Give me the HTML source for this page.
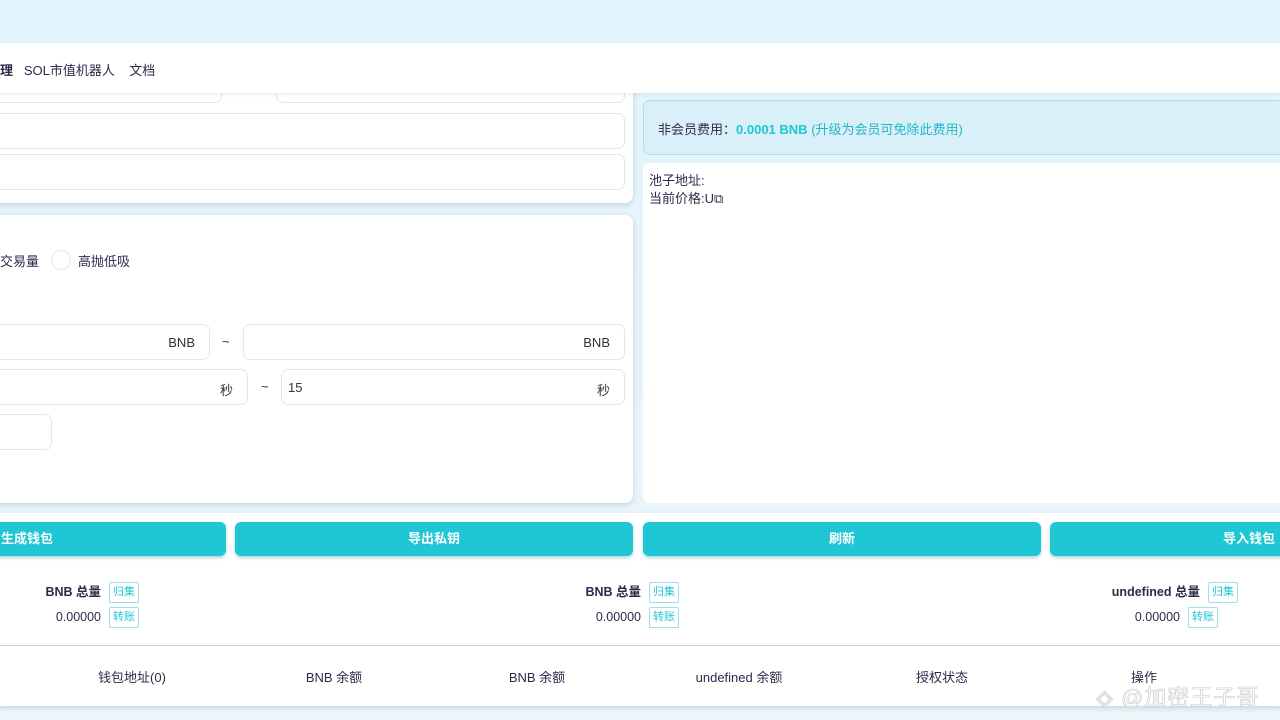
<!DOCTYPE html>
<html><head><meta charset="utf-8"><style>
*{box-sizing:border-box;margin:0;padding:0}
body{width:1280px;height:720px;overflow:hidden;background:linear-gradient(180deg,#e2f4fb,#eef5fb);font-family:"Liberation Sans","Noto Sans CJK SC",sans-serif;color:#2d2a4a;position:relative;font-size:13px}
.a{position:absolute}
.card{background:#fff;border-radius:8px;box-shadow:0 2px 6px rgba(120,150,170,.35)}
.inp{position:absolute;background:#fff;border:1px solid #e3e6ee;border-radius:7px;font-size:13px;color:#333}
.btn{position:absolute;top:522px;height:34px;background:#1fc6d4;border-radius:6px;color:#fff;font-weight:bold;font-size:13px;text-align:center;line-height:34px;box-shadow:0 2px 3px rgba(0,120,140,.3)}
.tag{display:inline-block;border:1px solid #9fe0e8;color:#1fc6d4;font-size:11px;padding:2px 3px;border-radius:2px;margin-left:8px;line-height:15px;vertical-align:middle}
.th{position:absolute;top:667px;font-size:13px;text-align:center;transform:translateX(-50%);white-space:nowrap}
</style></head><body>
<div class="a" style="left:0;top:43px;width:1280px;height:50px;background:#fff;box-shadow:0 2px 4px rgba(0,0,0,.06);z-index:3"></div>
<div class="a" style="left:0;top:60px;z-index:4;font-size:13px;white-space:nowrap"><b>理</b>&nbsp;&nbsp; SOL市值机器人&nbsp;&nbsp;&nbsp; 文档</div>
<div class="card a" style="left:-10px;top:60px;width:643px;height:143px"></div>
<div class="inp" style="left:-10px;top:80px;width:232px;height:23px"></div>
<div class="inp" style="left:276px;top:80px;width:349px;height:23px"></div>
<div class="inp" style="left:-10px;top:113px;width:635px;height:36px"></div>
<div class="inp" style="left:-10px;top:154px;width:635px;height:36px"></div>
<div class="card a" style="left:-10px;top:215px;width:643px;height:288px"></div>
<div class="a" style="left:0;top:251px">交易量</div>
<div class="a" style="left:51px;top:250px;width:20px;height:20px;border:1px solid #e3e6ee;border-radius:50%"></div>
<div class="a" style="left:78px;top:251px">高抛低吸</div>
<div class="inp" style="left:-10px;top:324px;width:220px;height:36px;text-align:right;padding:10px 14px">BNB</div>
<div class="a" style="left:222px;top:334px">~</div>
<div class="inp" style="left:243px;top:324px;width:382px;height:36px;text-align:right;padding:10px 14px">BNB</div>
<div class="inp" style="left:-10px;top:369px;width:258px;height:36px;text-align:right;padding:10px 14px">秒</div>
<div class="a" style="left:261px;top:379px">~</div>
<div class="inp" style="left:281px;top:369px;width:344px;height:36px;padding:10px 6px"><span>15</span><span style="float:right;margin-right:8px">秒</span></div>
<div class="inp" style="left:-10px;top:414px;width:62px;height:36px"></div>
<div class="a" style="left:643px;top:100px;width:650px;height:55px;background:#daf0f9;border:1px solid #a8e2ec;border-radius:7px;padding:18px 14px;font-size:13px">非会员费用：<b style="color:#1fc6d4">0.0001 BNB</b> <span style="color:#1fb8c8">(升级为会员可免除此费用)</span></div>
<div class="a" style="left:643px;top:163px;width:650px;height:340px;background:#fff;border-radius:6px;padding:9px 6px;line-height:18px">池子地址:<br>当前价格:U<span style="font-size:13px">⧉</span></div>
<div class="card a" style="left:-10px;top:513px;width:1300px;height:193px"></div>
<div class="btn" style="left:-10px;width:236px;text-align:left;padding-left:11px">生成钱包</div>
<div class="btn" style="left:235px;width:398px">导出私钥</div>
<div class="btn" style="left:643px;width:398px">刷新</div>
<div class="btn" style="left:1050px;width:240px;text-align:right;padding-right:15px">导入钱包</div>
<div class="a" style="left:0;top:580px;width:139px;text-align:right;line-height:25px;font-size:12.5px"><b>BNB 总量</b><span class="tag">归集</span><br>0.00000<span class="tag">转账</span></div>
<div class="a" style="left:540px;top:580px;width:139px;text-align:right;line-height:25px;font-size:12.5px"><b>BNB 总量</b><span class="tag">归集</span><br>0.00000<span class="tag">转账</span></div>
<div class="a" style="left:1000px;top:580px;width:238px;text-align:right;line-height:25px;font-size:12.5px"><b>undefined 总量</b><span class="tag">归集</span><br><span style="margin-right:20px">0.00000<span class="tag">转账</span></span></div>
<div class="a" style="left:0;top:645px;width:1280px;height:1px;background:#c9ccd4"></div>
<div class="th" style="left:132px">钱包地址(0)</div>
<div class="th" style="left:334px">BNB 余额</div>
<div class="th" style="left:537px">BNB 余额</div>
<div class="th" style="left:739px">undefined 余额</div>
<div class="th" style="left:942px">授权状态</div>
<div class="th" style="left:1144px">操作</div>
<div class="a" style="left:1096px;top:680px;font-size:22px;color:rgba(255,255,255,.85);-webkit-text-stroke:0.6px #c8c8c8;letter-spacing:1px">◈ @加密王子哥</div>
</body></html>
